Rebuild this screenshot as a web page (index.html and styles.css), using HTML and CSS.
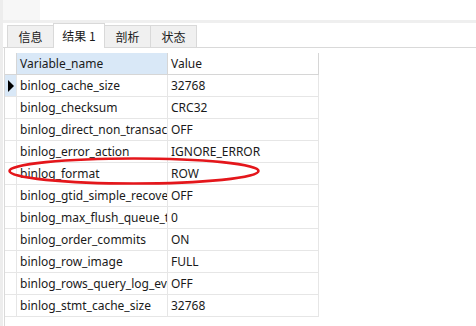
FILE: index.html
```html
<!DOCTYPE html>
<html>
<head>
<meta charset="utf-8">
<link rel="stylesheet" href="styles.css">
</head>
<body>
<div class="screen">
  <div class="strip"></div>
  <div class="main">
    <div class="topbar"><div class="topleft"></div></div>
    <div class="band"></div>
    <div class="tabs">
      <div class="tab">信息</div>
      <div class="tab active">结果 1</div>
      <div class="tab">剖析</div>
      <div class="tab">状态</div>
    </div>
    <div class="panel">
      <div class="grid">
        <div class="cell ind head"></div>
        <div class="cell name head sel">Variable_name</div>
        <div class="cell val head">Value</div>

        <div class="cell ind cur"><span class="arrow"></span></div>
        <div class="cell name">binlog_cache_size</div>
        <div class="cell val">32768</div>

        <div class="cell ind"></div>
        <div class="cell name">binlog_checksum</div>
        <div class="cell val">CRC32</div>

        <div class="cell ind"></div>
        <div class="cell name">binlog_direct_non_transactional_updates</div>
        <div class="cell val">OFF</div>

        <div class="cell ind"></div>
        <div class="cell name">binlog_error_action</div>
        <div class="cell val">IGNORE_ERROR</div>

        <div class="cell ind"></div>
        <div class="cell name">binlog_format</div>
        <div class="cell val">ROW</div>

        <div class="cell ind"></div>
        <div class="cell name">binlog_gtid_simple_recovery</div>
        <div class="cell val">OFF</div>

        <div class="cell ind"></div>
        <div class="cell name">binlog_max_flush_queue_time</div>
        <div class="cell val">0</div>

        <div class="cell ind"></div>
        <div class="cell name">binlog_order_commits</div>
        <div class="cell val">ON</div>

        <div class="cell ind"></div>
        <div class="cell name">binlog_row_image</div>
        <div class="cell val">FULL</div>

        <div class="cell ind"></div>
        <div class="cell name">binlog_rows_query_log_events</div>
        <div class="cell val">OFF</div>

        <div class="cell ind"></div>
        <div class="cell name">binlog_stmt_cache_size</div>
        <div class="cell val">32768</div>
      </div>
    </div>
  </div>
  <svg class="mark" width="476" height="326" viewBox="0 0 476 326">
    <ellipse cx="134" cy="171" rx="124.5" ry="12.5" fill="none" stroke="#e4161b" stroke-width="2.6"/>
  </svg>
</div>
</body>
</html>
```

FILE: styles.css
```css
html, body {
  margin: 0;
  padding: 0;
  background: #ffffff;
}
body {
  font-family: "Noto Sans", "Noto Sans CJK SC", sans-serif;
  font-size: 12px;
  color: #1a1a1a;
}
.screen {
  position: relative;
  width: 476px;
  height: 326px;
  overflow: hidden;
  display: flex;
}
.strip {
  width: 3px;
  flex: none;
  background: #ededed;
}
.main {
  flex: 1;
  display: flex;
  flex-direction: column;
}
.topbar {
  height: 20px;
  display: flex;
}
.topleft {
  width: 37px;
  background: #f7f7f7;
}
.band {
  height: 3px;
  background: #efefef;
}
.tabs {
  height: 24px;
  display: flex;
  align-items: flex-end;
  padding-left: 4px;
  border-bottom: 1px solid #d9d9d9;
}
.tab {
  box-sizing: border-box;
  width: 47px;
  height: 22px;
  margin-left: -1px;
  border: 1px solid #d9d9d9;
  border-bottom: none;
  background: #f0f0f0;
  display: flex;
  align-items: center;
  justify-content: center;
  font-family: "Noto Sans CJK SC", sans-serif;
  font-size: 12px;
  color: #1a1a1a;
}
.tab:first-child {
  margin-left: 0;
}
.tab.active {
  position: relative;
  z-index: 1;
  width: 52px;
  height: 25px;
  margin-bottom: -1px;
  background: #ffffff;
  padding-bottom: 2px;
}
.panel {
  flex: 1;
  margin-left: 1px;
  border-left: 1px solid #dadada;
  padding-top: 5px;
}
.grid {
  display: grid;
  grid-template-columns: 12px 151px 151px;
  grid-auto-rows: 22px;
}
.cell {
  box-sizing: border-box;
  border-right: 1px solid #e6e6e6;
  border-bottom: 1px solid #e6e6e6;
  padding-left: 3px;
  white-space: nowrap;
  overflow: hidden;
  line-height: 21px;
}
.cell.head {
  border-color: #d6d6d6;
}
.cell.sel {
  background: #d9e8f7;
}
.cell.ind {
  padding-left: 0;
  display: flex;
  align-items: center;
  justify-content: center;
}
.cell.cur {
  background: #d9e8f7;
}
.arrow {
  width: 0;
  height: 0;
  border-top: 6px solid transparent;
  border-bottom: 6px solid transparent;
  border-left: 6px solid #000000;
  margin-left: 1px;
}
.mark {
  position: absolute;
  left: 0;
  top: 0;
  pointer-events: none;
}
```
